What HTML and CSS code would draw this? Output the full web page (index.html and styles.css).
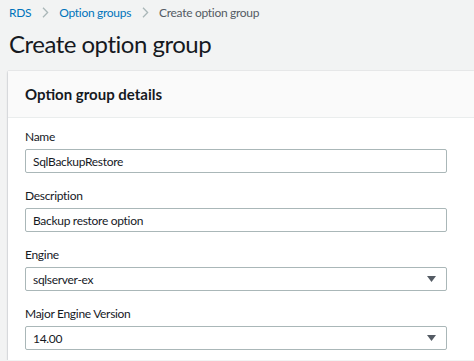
FILE: index.html
```html
<!DOCTYPE html>
<html>
<head>
<meta charset="utf-8">
<link rel="stylesheet" href="styles.css">
</head>
<body>
<div class="page">
  <nav class="crumbs">
    <a class="crumb-link">RDS</a>
    <span class="sep"><svg width="7" height="11" viewBox="0 0 7 11"><path d="M1 0.8 L5.6 5.5 L1 10.2" fill="none" stroke="#aab7b8" stroke-width="1.3"/></svg></span>
    <a class="crumb-link">Option groups</a>
    <span class="sep"><svg width="7" height="11" viewBox="0 0 7 11"><path d="M1 0.8 L5.6 5.5 L1 10.2" fill="none" stroke="#aab7b8" stroke-width="1.3"/></svg></span>
    <span class="crumb-current">Create option group</span>
  </nav>
  <h1 class="title">Create option group</h1>
  <section class="card">
    <header class="card-head">
      <h2>Option group details</h2>
    </header>
    <div class="card-body">
      <div class="field">
        <label>Name</label>
        <div class="input">SqlBackupRestore</div>
      </div>
      <div class="field">
        <label>Description</label>
        <div class="input">Backup restore option</div>
      </div>
      <div class="field">
        <label>Engine</label>
        <div class="input select"><span>sqlserver-ex</span><svg class="caret" width="9" height="6" viewBox="0 0 9 6"><path d="M0 0 H9 L4.5 6 Z" fill="#545b64"/></svg></div>
      </div>
      <div class="field">
        <label>Major Engine Version</label>
        <div class="input select"><span>14.00</span><svg class="caret" width="9" height="6" viewBox="0 0 9 6"><path d="M0 0 H9 L4.5 6 Z" fill="#545b64"/></svg></div>
      </div>
    </div>
  </section>
</div>
</body>
</html>
```

FILE: styles.css
```css
html, body {
  margin: 0;
  padding: 0;
  background: #f2f3f3;
  font-family: Lato, "Open Sans", sans-serif;
  color: #16191f;
  overflow: hidden;
}
.page {
  padding: 3px 0 0 9px;
}
.crumbs {
  display: flex;
  align-items: center;
  height: 18px;
  font-size: 12px;
  letter-spacing: -0.3px;
}
.crumb-link {
  color: #0073bb;
}
.crumb-current {
  color: #545b64;
}
.sep {
  display: flex;
  margin: 0 10px 0 11px;
}
.title {
  margin: 6px 0 0 0;
  font-size: 24px;
  letter-spacing: -0.5px;
  font-weight: 400;
  line-height: 34px;
  color: #16191f;
}
.card {
  margin: 10px 0 0 -1px;
  background: #fff;
  box-shadow: 0 1px 2px rgba(0,22,40,0.25), 0 0 1px rgba(0,22,40,0.2);
}
.card-head {
  background: #fafafa;
  border-bottom: 1px solid #eaeded;
  height: 46px;
  display: flex;
  align-items: center;
  padding-left: 17px;
}
.card-head h2 {
  margin: 0;
  font-size: 15px;
  font-weight: 700;
  color: #16191f;
}
.card-body {
  padding: 10px 0 10px 17px;
  display: flex;
  flex-direction: column;
  gap: 14px;
}
.field {
  display: flex;
  flex-direction: column;
  gap: 4px;
  width: 422px;
}
.field label {
  font-size: 12px;
  letter-spacing: -0.3px;
  line-height: 17px;
  color: #16191f;
}
.input {
  height: 22px;
  border: 1px solid #aab7b8;
  border-radius: 2px;
  display: flex;
  align-items: center;
  padding: 0 7px;
  font-size: 12px;
  letter-spacing: -0.3px;
  color: #16191f;
}
.select {
  justify-content: space-between;
  padding-right: 10px;
}
.caret {
  display: block;
}
```
